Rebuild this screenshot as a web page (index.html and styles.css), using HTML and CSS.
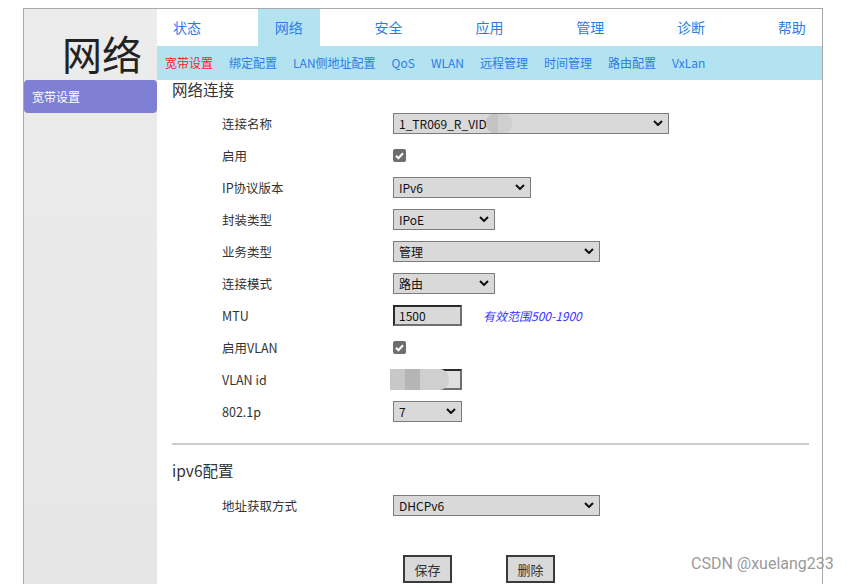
FILE: index.html
```
<!DOCTYPE html>
<html lang="zh-CN">
<head>
<meta charset="utf-8">
<title>网络 - 宽带设置</title>
<link rel="stylesheet" href="styles.css">
</head>
<body>
<div class="frame">
  <aside class="side">
    <div class="logo">网络</div>
    <a class="side-item">宽带设置</a>
  </aside>
  <main class="main">
    <nav class="topnav">
      <div class="tab"><a>状态</a></div>
      <div class="tab active"><a>网络</a></div>
      <div class="tab"><a>安全</a></div>
      <div class="tab"><a>应用</a></div>
      <div class="tab"><a>管理</a></div>
      <div class="tab"><a>诊断</a></div>
      <div class="tab"><a>帮助</a></div>
    </nav>
    <nav class="subnav">
      <a class="cur">宽带设置</a>
      <a>绑定配置</a>
      <a>LAN侧地址配置</a>
      <a>QoS</a>
      <a>WLAN</a>
      <a>远程管理</a>
      <a>时间管理</a>
      <a>路由配置</a>
      <a>VxLan</a>
    </nav>
    <section class="content">
      <h2 class="heading">网络连接</h2>
      <div class="form">
        <div class="row"><span class="label">连接名称</span>
          <div class="select w276"><span class="val">1_TR069_R_VID</span><span class="blur blur-name"></span><svg class="chev" viewBox="0 0 10 6"><path d="M1 1l4 4 4-4" /></svg></div></div>
        <div class="row"><span class="label">启用</span>
          <span class="check"><svg viewBox="0 0 13 13"><path d="M3 6.8l2.4 2.4L10 4.2" /></svg></span></div>
        <div class="row"><span class="label">IP协议版本</span>
          <div class="select w138"><span class="val">IPv6</span><svg class="chev" viewBox="0 0 10 6"><path d="M1 1l4 4 4-4" /></svg></div></div>
        <div class="row"><span class="label">封装类型</span>
          <div class="select w102"><span class="val">IPoE</span><svg class="chev" viewBox="0 0 10 6"><path d="M1 1l4 4 4-4" /></svg></div></div>
        <div class="row"><span class="label">业务类型</span>
          <div class="select w207"><span class="val">管理</span><svg class="chev" viewBox="0 0 10 6"><path d="M1 1l4 4 4-4" /></svg></div></div>
        <div class="row"><span class="label">连接模式</span>
          <div class="select w102"><span class="val">路由</span><svg class="chev" viewBox="0 0 10 6"><path d="M1 1l4 4 4-4" /></svg></div></div>
        <div class="row"><span class="label">MTU</span>
          <div class="input">1500</div><span class="hint">有效范围500-1900</span></div>
        <div class="row"><span class="label">启用VLAN</span>
          <span class="check"><svg viewBox="0 0 13 13"><path d="M3 6.8l2.4 2.4L10 4.2" /></svg></span></div>
        <div class="row"><span class="label">VLAN id</span>
          <div class="input vlan"><span class="mosaic"><i class="m1"></i><i class="m2"></i><i class="m3"></i></span></div></div>
        <div class="row"><span class="label">802.1p</span>
          <div class="select w69"><span class="val">7</span><svg class="chev" viewBox="0 0 10 6"><path d="M1 1l4 4 4-4" /></svg></div></div>
      </div>
      <hr class="divider">
      <h2 class="heading h2b">ipv6配置</h2>
      <div class="form">
        <div class="row"><span class="label">地址获取方式</span>
          <div class="select w207"><span class="val">DHCPv6</span><svg class="chev" viewBox="0 0 10 6"><path d="M1 1l4 4 4-4" /></svg></div></div>
      </div>
      <div class="buttons">
        <button class="btn">保存</button>
        <button class="btn">删除</button>
      </div>
    </section>
  </main>
</div>
<div class="watermark">CSDN @xuelang233</div>
</body>
</html>
```
FILE: styles.css
```
* { box-sizing: border-box; }
html, body { margin: 0; padding: 0; }
body {
  background: #fff;
  font-family: "Noto Sans CJK SC", "Noto Sans", sans-serif;
  color: #333;
  padding: 8px 0 0 23px;
  overflow: hidden;
  height: 584px;
}
.frame {
  width: 800px;
  height: 576px;
  border: 1px solid #a9a9a9;
  border-bottom: none;
  display: flex;
}
.side {
  width: 133px;
  flex: none;
  background: linear-gradient(#ececec, #e6e6e6);
}
.logo {
  height: 71px;
  font-size: 40px;
  line-height: 1;
  color: #222;
  padding: 24px 0 0 38px;
}
.side-item {
  display: block;
  height: 33px;
  line-height: 33px;
  background: #7f7fd5;
  color: #fff;
  font-size: 12px;
  padding-left: 8px;
  border-radius: 4px;
}
.main { flex: 1; min-width: 0; }
.topnav {
  height: 37px;
  display: flex;
  overflow: hidden;
  white-space: nowrap;
}
.tab { width: 100.8px; flex: none; }
.tab a {
  display: inline-block;
  height: 37px;
  line-height: 37px;
  padding: 0 16px;
  font-size: 14px;
  color: #2a7de8;
}
.tab.active a { background: #b3e3f0; padding: 0 17px; }
.subnav {
  height: 34px;
  background: #b3e3f0;
  display: flex;
  align-items: center;
  gap: 16px;
  padding-left: 8px;
  padding-bottom: 1px;
  font-size: 12px;
  white-space: nowrap;
}
.subnav a { color: #2a7de8; }
.subnav a.cur { color: #ff1a1a; }
.content { padding: 0 13px 0 15px; }
.heading {
  margin: -1px 0 0;
  font-size: 15.5px;
  font-weight: normal;
  line-height: 20px;
  color: #333;
}
.form { margin-top: 8px; }
.row {
  height: 32px;
  display: flex;
  align-items: center;
  font-size: 12.5px;
}
.label { width: 221px; padding-left: 50px; flex: none; }
.select {
  position: relative;
  height: 21px;
  background: #d9d9d9;
  border: 1px solid #7b7b7b;
  display: flex;
  align-items: center;
  padding-left: 5px;
  font-size: 12px;
  color: #111;
}
.select .val { flex: 1; }
.chev {
  width: 10px;
  height: 6px;
  margin-right: 5px;
  fill: none;
  stroke: #111;
  stroke-width: 2;
}
.w276 { width: 276px; }
.w138 { width: 138px; }
.w102 { width: 102px; }
.w207 { width: 207px; }
.w69 { width: 69px; }
.blur {
  position: absolute;
  top: 0;
  height: 19px;
  border-radius: 8px;
  background: linear-gradient(90deg, #c4c4c4 0 45%, #cfcfcf 45% 100%);
}
.blur-name { left: 92px; width: 26px; }
.check {
  width: 13px;
  height: 13px;
  border-radius: 2px;
  background: #6e6e6e;
  display: inline-flex;
}
.check svg { width: 13px; height: 13px; fill: none; stroke: #fff; stroke-width: 2; }
.input {
  position: relative;
  width: 69px;
  height: 21px;
  background: #d9d9d9;
  border-style: solid;
  border-width: 2px;
  border-color: #2b2b2b #6f6f6f #6f6f6f #2b2b2b;
  font-size: 12px;
  color: #111;
  line-height: 17px;
  padding-left: 4px;
}
.hint {
  margin-left: 21px;
  font-size: 12px;
  font-style: italic;
  color: #3535ff;
}
.input.vlan { background: #e0e0e0; }
.mosaic {
  position: absolute;
  left: -5px;
  top: -2px;
  width: 59px;
  height: 21px;
  display: flex;
  border-radius: 0 10px 10px 0;
  overflow: hidden;
  background: #d6d6d6;
}
.mosaic i { display: block; height: 100%; }
.m1 { width: 15px; background: #c8c8c8; }
.m2 { width: 15px; background: #b5b5b5; }
.m3 { width: 29px; background: #cfcfcf; }
.divider {
  margin: 16px 0 0;
  border: none;
  height: 2px;
  background: #cccccc;
}
.h2b { margin-top: 15px; }
.h2b + .form { margin-top: 9px; }
.buttons {
  margin-top: 34px;
  padding-left: 231px;
  display: flex;
  gap: 54px;
}
.btn {
  width: 49px;
  height: 28px;
  background: #d9d9d9;
  border: 2px solid #3a3a3a;
  font-family: inherit;
  font-size: 13px;
  color: #333;
  padding: 0;
}
.watermark {
  position: absolute;
  left: 691px;
  top: 554px;
  font-family: "Roboto", sans-serif;
  font-size: 16px;
  color: #9a9a9a;
}
```
